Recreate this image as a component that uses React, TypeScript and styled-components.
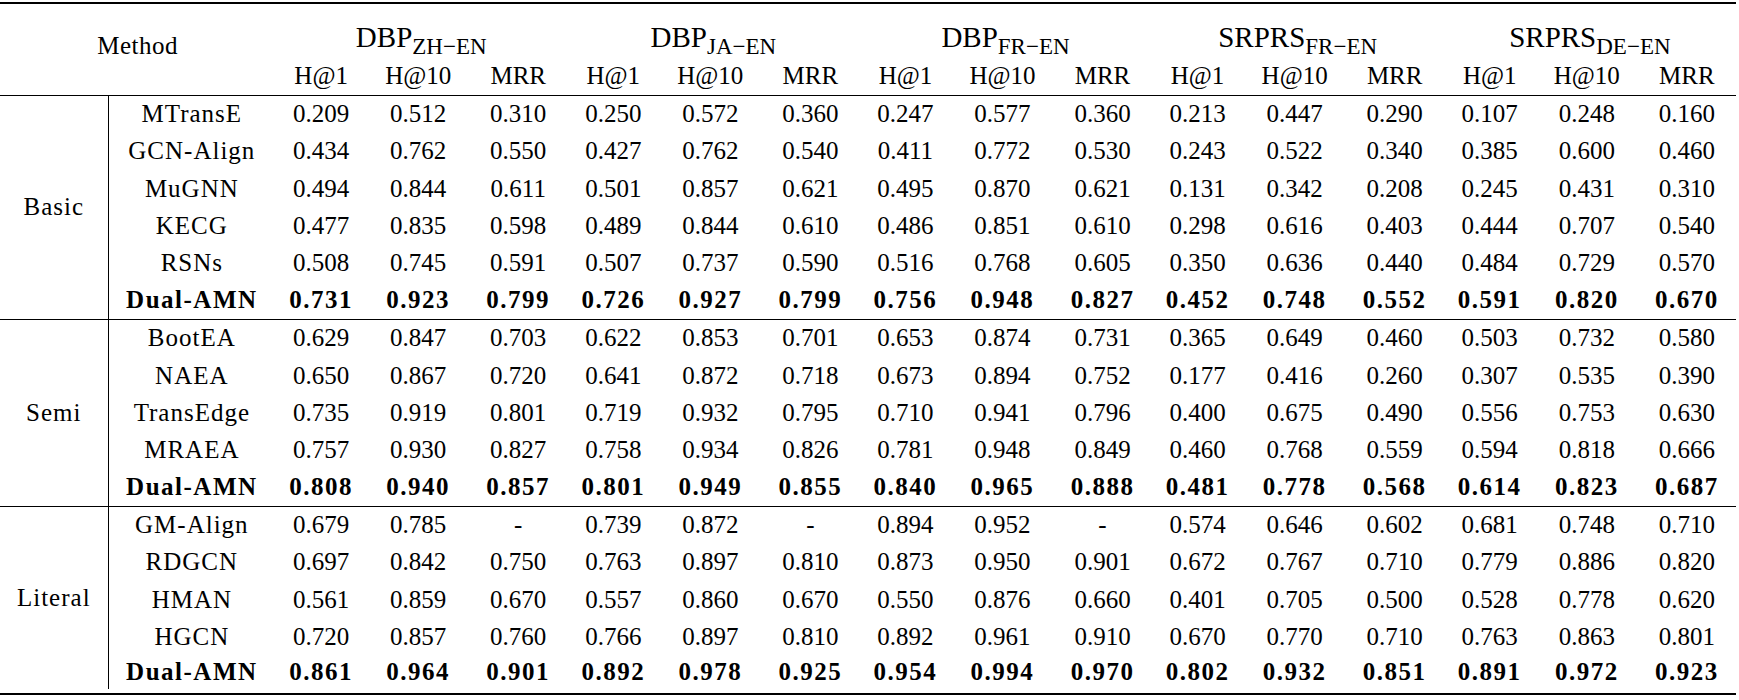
import React from 'react';
import styled, { createGlobalStyle } from 'styled-components';

const serif = '"Liberation Serif", "Times New Roman", Times, serif';

const GlobalStyle = createGlobalStyle`
  html, body {
    margin: 0;
    padding: 0;
    background: #fff;
  }
  body {
    font-family: ${serif};
    color: #000;
  }
`;

const Page = styled.div`
  width: 1736px;
  padding-top: 2px;
  font-family: ${serif};
`;

const ResultsTable = styled.table`
  width: 1736px;
  border-collapse: collapse;
  table-layout: fixed;
  border-top: 2px solid #000;
  font-family: ${serif};
  font-size: 25px;
  line-height: 1.15;
`;

const BottomRule = styled.div`
  height: 2px;
  margin-top: 4px;
  background: #000;
`;

const HeadRow = styled.tr<{ $rule?: boolean }>`
  border-bottom: ${(p) => (p.$rule ? '1.5px solid #000' : 'none')};
`;

const HeadCell = styled.th<{ $height?: number }>`
  font-family: ${serif};
  font-weight: normal;
  text-align: center;
  vertical-align: middle;
  padding: 0;
  white-space: nowrap;
  height: ${(p) => (p.$height ? `${p.$height}px` : 'auto')};
`;

const MethodCell = styled(HeadCell)`
  letter-spacing: 0.5px;
  padding-bottom: 6px;
`;

const DatasetCell = styled(HeadCell)`
  font-size: 29px;
  vertical-align: bottom;
  padding-bottom: 6px;
`;

const MetricCell = styled(HeadCell)`
  padding-bottom: 2px;
`;

const Sub = styled.sub`
  font-size: 23px;
  vertical-align: -0.3em;
  line-height: 0;
`;

const BodyRow = styled.tr<{ $first?: boolean }>`
  border-top: ${(p) => (p.$first ? '1.5px solid #000' : 'none')};
`;

const GroupCell = styled.td`
  font-family: ${serif};
  text-align: center;
  vertical-align: middle;
  padding: 0;
  letter-spacing: 1px;
  border-right: 1.5px solid #000;
`;

const Cell = styled.td<{ $bold?: boolean; $height: number; $name?: boolean }>`
  font-family: ${serif};
  height: ${(p) => p.$height}px;
  text-align: center;
  vertical-align: middle;
  padding: 0;
  white-space: nowrap;
  font-weight: ${(p) => (p.$bold ? 'bold' : 'normal')};
  letter-spacing: ${(p) => (p.$bold ? 1.5 : p.$name ? 1 : 0)}px;
`;

type Row = { name: string; values: string[]; bold?: boolean };
type Group = { label: string; rows: Row[] };

const datasets = [
  ['DBP', 'ZH−EN'],
  ['DBP', 'JA−EN'],
  ['DBP', 'FR−EN'],
  ['SRPRS', 'FR−EN'],
  ['SRPRS', 'DE−EN'],
];

const metrics = ['H@1', 'H@10', 'MRR'];

const r = (name: string, line: string, bold?: boolean): Row => ({
  name,
  values: line.split(' '),
  bold,
});

const groups: Group[] = [
  {
    label: 'Basic',
    rows: [
      r('MTransE', '0.209 0.512 0.310 0.250 0.572 0.360 0.247 0.577 0.360 0.213 0.447 0.290 0.107 0.248 0.160'),
      r('GCN-Align', '0.434 0.762 0.550 0.427 0.762 0.540 0.411 0.772 0.530 0.243 0.522 0.340 0.385 0.600 0.460'),
      r('MuGNN', '0.494 0.844 0.611 0.501 0.857 0.621 0.495 0.870 0.621 0.131 0.342 0.208 0.245 0.431 0.310'),
      r('KECG', '0.477 0.835 0.598 0.489 0.844 0.610 0.486 0.851 0.610 0.298 0.616 0.403 0.444 0.707 0.540'),
      r('RSNs', '0.508 0.745 0.591 0.507 0.737 0.590 0.516 0.768 0.605 0.350 0.636 0.440 0.484 0.729 0.570'),
      r('Dual-AMN', '0.731 0.923 0.799 0.726 0.927 0.799 0.756 0.948 0.827 0.452 0.748 0.552 0.591 0.820 0.670', true),
    ],
  },
  {
    label: 'Semi',
    rows: [
      r('BootEA', '0.629 0.847 0.703 0.622 0.853 0.701 0.653 0.874 0.731 0.365 0.649 0.460 0.503 0.732 0.580'),
      r('NAEA', '0.650 0.867 0.720 0.641 0.872 0.718 0.673 0.894 0.752 0.177 0.416 0.260 0.307 0.535 0.390'),
      r('TransEdge', '0.735 0.919 0.801 0.719 0.932 0.795 0.710 0.941 0.796 0.400 0.675 0.490 0.556 0.753 0.630'),
      r('MRAEA', '0.757 0.930 0.827 0.758 0.934 0.826 0.781 0.948 0.849 0.460 0.768 0.559 0.594 0.818 0.666'),
      r('Dual-AMN', '0.808 0.940 0.857 0.801 0.949 0.855 0.840 0.965 0.888 0.481 0.778 0.568 0.614 0.823 0.687', true),
    ],
  },
  {
    label: 'Literal',
    rows: [
      r('GM-Align', '0.679 0.785 - 0.739 0.872 - 0.894 0.952 - 0.574 0.646 0.602 0.681 0.748 0.710'),
      r('RDGCN', '0.697 0.842 0.750 0.763 0.897 0.810 0.873 0.950 0.901 0.672 0.767 0.710 0.779 0.886 0.820'),
      r('HMAN', '0.561 0.859 0.670 0.557 0.860 0.670 0.550 0.876 0.660 0.401 0.705 0.500 0.528 0.778 0.620'),
      r('HGCN', '0.720 0.857 0.760 0.766 0.897 0.810 0.892 0.961 0.910 0.670 0.770 0.710 0.763 0.863 0.801'),
      r('Dual-AMN', '0.861 0.964 0.901 0.892 0.978 0.925 0.954 0.994 0.970 0.802 0.932 0.851 0.891 0.972 0.923', true),
    ],
  },
];

// column widths: group label, method name, then H@1 / H@10 / MRR per dataset
const metricWidths = [92, 102, 98];
const ROW_H = 37.2;

const App = () => {
  return (
    <Page>
      <GlobalStyle />
      <ResultsTable>
        <colgroup>
          <col style={{ width: 108 }} />
          <col style={{ width: 167 }} />
          {datasets.map((_, i) =>
            metricWidths.map((w, j) => <col key={`${i}-${j}`} style={{ width: w }} />)
          )}
        </colgroup>
        <thead>
          <HeadRow>
            <MethodCell colSpan={2} rowSpan={2}>
              Method
            </MethodCell>
            {datasets.map(([base, sub]) => (
              <DatasetCell key={base + sub} colSpan={3} $height={50}>
                {base}
                <Sub>{sub}</Sub>
              </DatasetCell>
            ))}
          </HeadRow>
          <HeadRow $rule>
            {datasets.map((d) =>
              metrics.map((m) => (
                <MetricCell key={d.join() + m} $height={33}>
                  {m}
                </MetricCell>
              ))
            )}
          </HeadRow>
        </thead>
        <tbody>
          {groups.map((g, gi) =>
            g.rows.map((row, ri) => {
              const h = gi === groups.length - 1 && ri === g.rows.length - 1 ? ROW_H - 4 : ROW_H;
              return (
                <BodyRow key={g.label + ri} $first={ri === 0 && gi > 0}>
                  {ri === 0 && <GroupCell rowSpan={g.rows.length}>{g.label}</GroupCell>}
                  <Cell $bold={row.bold} $height={h} $name>
                    {row.name}
                  </Cell>
                  {row.values.map((v, vi) => (
                    <Cell key={vi} $bold={row.bold} $height={h}>
                      {v}
                    </Cell>
                  ))}
                </BodyRow>
              );
            })
          )}
        </tbody>
      </ResultsTable>
      <BottomRule />
    </Page>
  );
};

export default App;
